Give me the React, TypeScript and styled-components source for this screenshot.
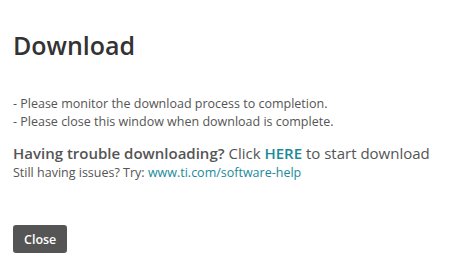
import * as React from "react";
import styled, { createGlobalStyle } from "styled-components";

const GlobalStyle = createGlobalStyle`
  html, body {
    margin: 0;
    padding: 0;
    background: #fff;
  }
  body {
    font-family: "Open Sans", "DejaVu Sans", sans-serif;
    color: #555;
  }
`;

const Dialog = styled.div`
  width: 457px;
  height: 261px;
  box-sizing: border-box;
  padding: 27px 13px 0 13px;
  display: flex;
  flex-direction: column;
`;

const Title = styled.h1`
  margin: 0;
  font-size: 25px;
  font-weight: 600;
  line-height: 36px;
  color: #333;
`;

const Notes = styled.div`
  margin-top: 32px;
  font-size: 12.5px;
  line-height: 18px;
  color: #555;
`;

const Trouble = styled.div`
  margin-top: 12px;
  font-size: 15px;
  line-height: 21px;
  color: #555;
`;

const Strong = styled.strong`
  font-weight: 600;
`;

const Link = styled.a<{ $bold?: boolean }>`
  color: #1a8a9a;
  text-decoration: none;
  font-weight: ${(p) => (p.$bold ? 600 : 400)};
`;

const Help = styled.div`
  font-size: 12.5px;
  line-height: 18px;
  color: #555;
`;

const Footer = styled.div`
  margin-top: 43px;
  display: flex;
`;

const CloseButton = styled.button`
  background: #555;
  color: #fff;
  border: none;
  border-radius: 3px;
  font-family: "Open Sans", "DejaVu Sans", sans-serif;
  font-size: 12.5px;
  font-weight: 600;
  height: 28px;
  padding: 0 11px;
  cursor: pointer;
`;

export default function App() {
  return (
    <>
      <GlobalStyle />
      <Dialog>
        <Title>Download</Title>
        <Notes>
          <div>- Please monitor the download process to completion.</div>
          <div>- Please close this window when download is complete.</div>
        </Notes>
        <Trouble>
          <Strong>Having trouble downloading?</Strong> Click{" "}
          <Link $bold href="#">
            HERE
          </Link>{" "}
          to start download
        </Trouble>
        <Help>
          Still having issues? Try: <Link href="#">www.ti.com/software-help</Link>
        </Help>
        <Footer>
          <CloseButton>Close</CloseButton>
        </Footer>
      </Dialog>
    </>
  );
}
